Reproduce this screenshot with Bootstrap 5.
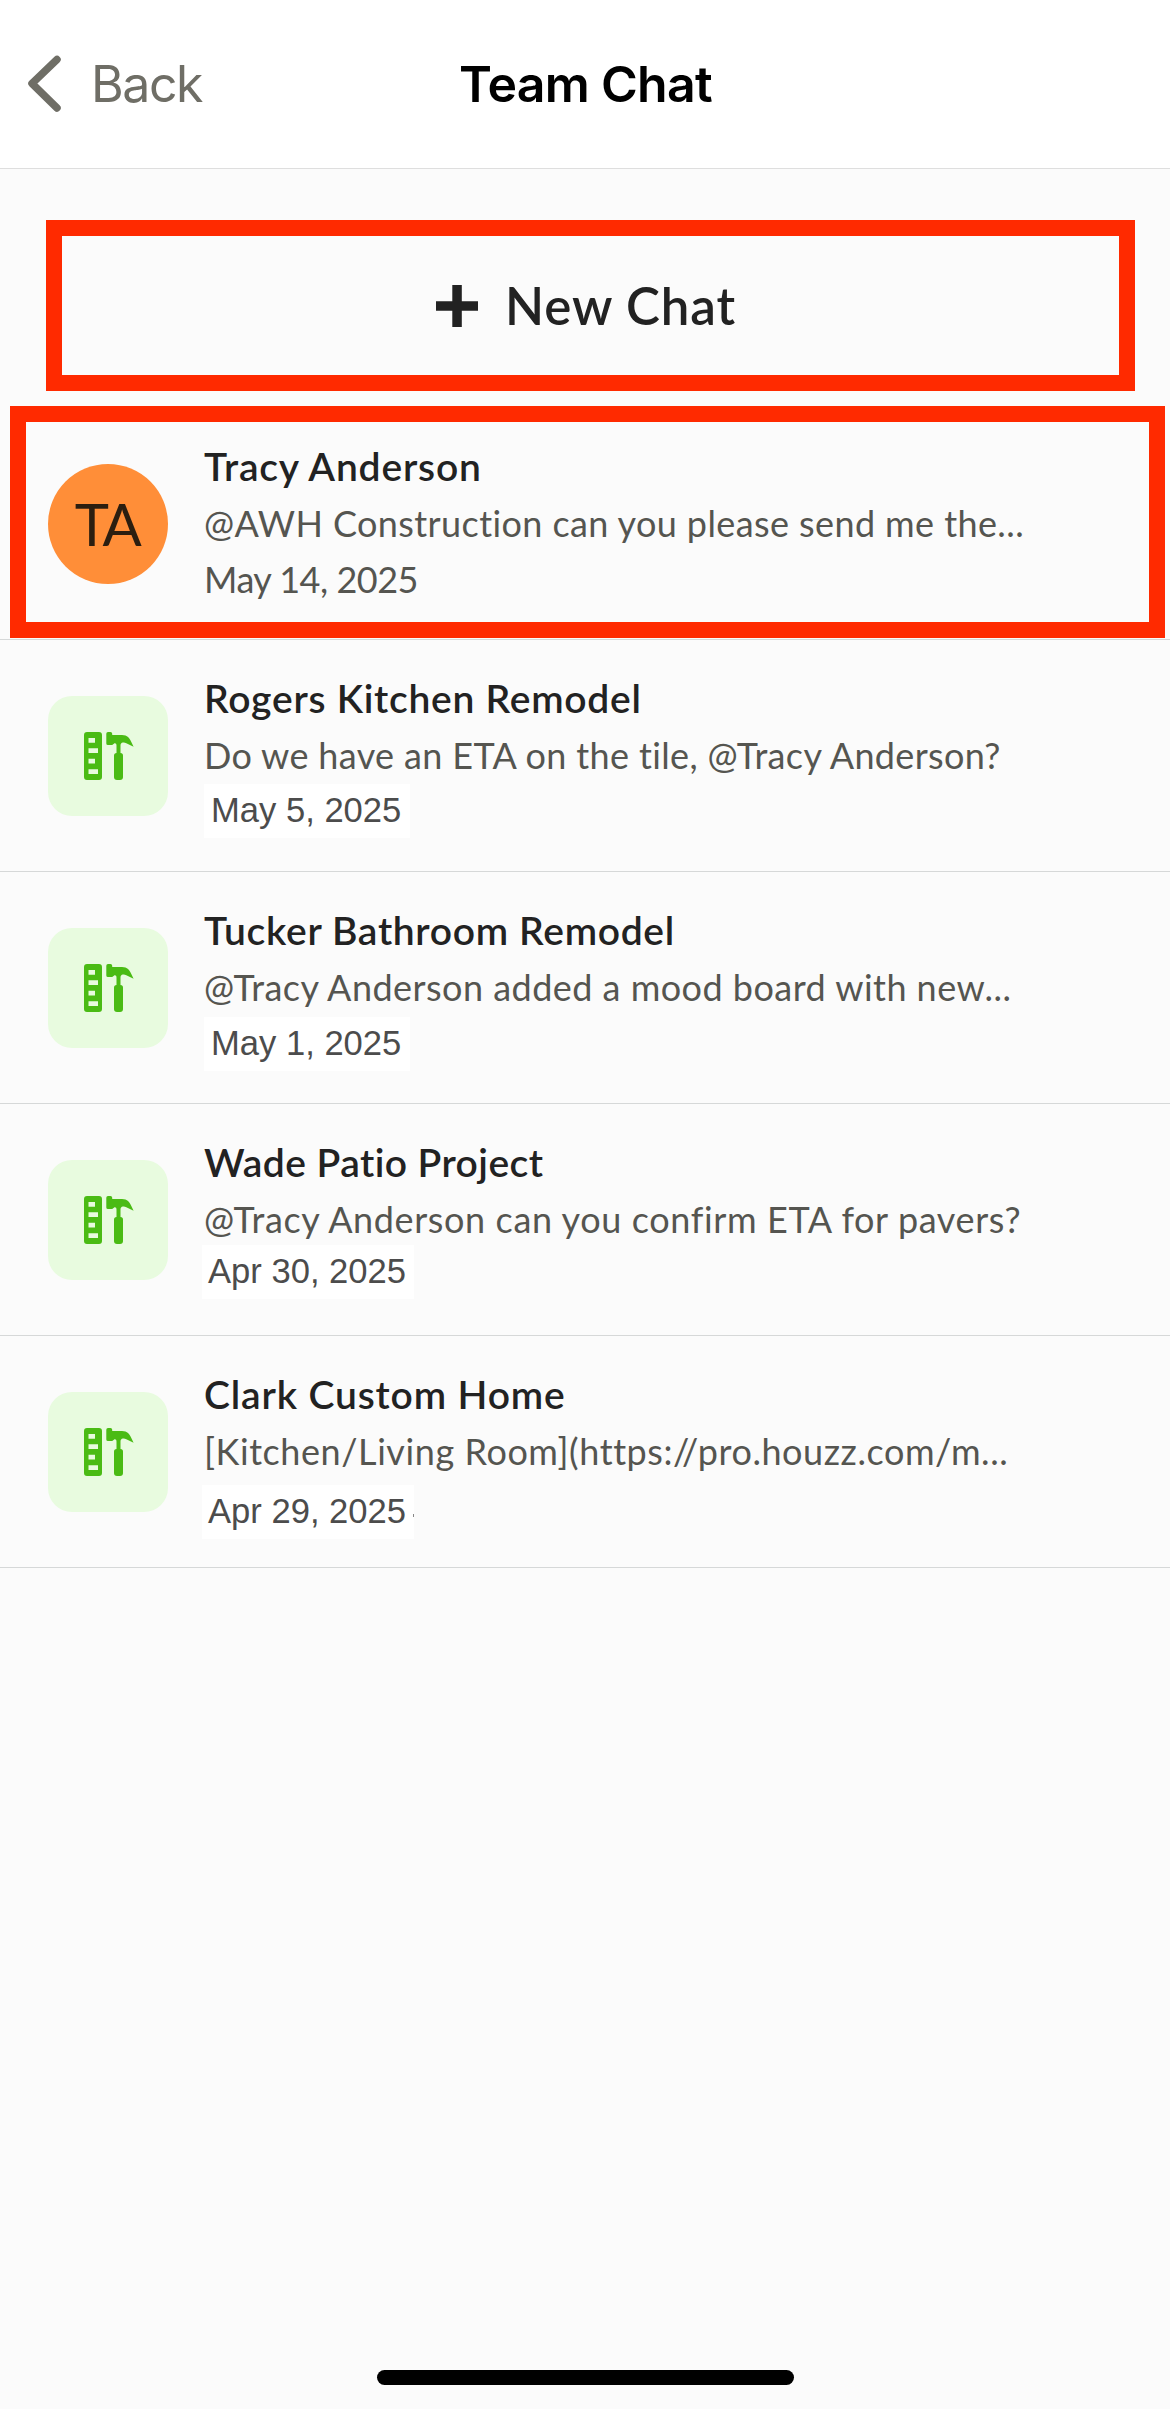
<!DOCTYPE html>
<html lang="en">
<head>
<meta charset="utf-8">
<meta name="viewport" content="width=device-width, initial-scale=1">
<title>Team Chat</title>
<link rel="stylesheet" href="https://cdn.jsdelivr.net/npm/bootstrap@5.3.0/dist/css/bootstrap.min.css">
<style>
  body { background: #fbfbfb; font-family: Lato, "Liberation Sans", sans-serif; color: #222; }
  .screen { height: 2409px; }
  .top-bar { height: 169px; border-bottom: 1px solid #dedede; font-family: Inter, "Liberation Sans", sans-serif; font-size: 50px; line-height: 60px; padding: 54px 0 0 27px; }
  .back-link { color: #6f6e66; letter-spacing: -1.45px; gap: 29px; width: 432px; }
  .top-title { color: #000; font-size: 50px; font-weight: 600; letter-spacing: -.71px; line-height: 60px; }
  .new-chat-area { height: 239px; padding: 51px 35px 0 46px; }
  .new-chat { height: 171px; border: 16px solid #ff2a00; border-radius: 0; font-size: 51px; font-weight: 600; letter-spacing: .9px; color: #222; gap: 27px; padding: 0 9px 0 0; line-height: 60px; }
  .new-chat:hover { border-color: #ff2a00; color: #222; }
  .chat-row { height: 232px; border-bottom: 1px solid #d6d8d8; padding: 30px 48px 0; gap: 36px; color: #222; }
  .focus-frame { position: absolute; top: -2px; left: 10px; right: 5px; height: 232px; border: 16px solid #ff2a00; }
  .avatar { width: 120px; height: 120px; margin-top: 26px; flex: none; }
  .avatar-person { background: #ff8e38; font-size: 58px; letter-spacing: -2.5px; color: #2b1e10; padding: 0 2px 1px 0; }
  .avatar-project { background: #e8fbdf; border-radius: 24px; }
  .chat-name { font-size: 39px; font-weight: 600; line-height: 57px; }
  .chat-text { font-size: 36px; line-height: 56px; color: #555550; }
  .date-chip { background: #fff; font-family: "Liberation Sans", Arial, sans-serif; font-size: 34.6px; line-height: 52px; height: 54px; color: #4c4c4c; padding-left: 7px; width: 206px; }
  .date-chip.wide { width: 212px; margin-left: -2px; padding-left: 6px; }
  .tick { width: 1px; height: 3px; background: #888; margin-top: 29px; }
  .home-bar { width: 417px; height: 15px; background: #000; margin-bottom: 24px; }
</style>
</head>
<body>
<div class="screen d-flex flex-column">
  <header class="top-bar bg-white d-flex align-items-start">
    <a href="#" class="back-link d-flex text-decoration-none">
      <svg width="35" height="60" viewBox="0 0 35 60"><path d="M30 5.500L5 29.500L30 54" fill="none" stroke="#6f6e66" stroke-width="7.500" stroke-linecap="round" stroke-linejoin="round"/></svg>
      <span>Back</span>
    </a>
    <h1 class="top-title mb-0">Team Chat</h1>
  </header>

  <div class="new-chat-area">
    <button class="new-chat btn w-100 d-flex align-items-center justify-content-center">
      <svg width="42" height="42" viewBox="0 0 42 42"><path d="M16.300 0h9.500v16.300H42v9.500H25.800V42h-9.500V25.800H0v-9.500h16.300z" fill="#222"/></svg>
      <span>New Chat</span>
    </button>
  </div>

  <main>
    <div class="chat-row d-flex position-relative">
      <div class="avatar avatar-person rounded-circle d-flex align-items-center justify-content-center">TA</div>
      <div class="text-nowrap">
        <div class="chat-name" style="letter-spacing:.83px">Tracy Anderson</div>
        <div class="chat-text" style="letter-spacing:.4px">@AWH Construction can you please send me the...</div>
        <div class="chat-text" style="letter-spacing:-.5px">May 14, 2025</div>
      </div>
      <div class="focus-frame"></div>
    </div>

    <div class="chat-row d-flex">
      <div class="avatar avatar-project"><svg width="120" height="120" viewBox="0 0 120 120"><use href="#tools"/></svg></div>
      <div class="text-nowrap">
        <div class="chat-name" style="letter-spacing:.74px">Rogers Kitchen Remodel</div>
        <div class="chat-text" style="letter-spacing:.35px">Do we have an ETA on the tile, @Tracy Anderson?</div>
        <div class="date-chip" style="margin-top:1px">May 5, 2025</div>
      </div>
    </div>

    <div class="chat-row d-flex">
      <div class="avatar avatar-project"><svg width="120" height="120" viewBox="0 0 120 120"><use href="#tools"/></svg></div>
      <div class="text-nowrap">
        <div class="chat-name" style="letter-spacing:.68px">Tucker Bathroom Remodel</div>
        <div class="chat-text" style="letter-spacing:.47px">@Tracy Anderson added a mood board with new...</div>
        <div class="date-chip" style="margin-top:2px">May 1, 2025</div>
      </div>
    </div>

    <div class="chat-row d-flex">
      <div class="avatar avatar-project"><svg width="120" height="120" viewBox="0 0 120 120"><use href="#tools"/></svg></div>
      <div class="text-nowrap">
        <div class="chat-name" style="letter-spacing:.43px">Wade Patio Project</div>
        <div class="chat-text" style="letter-spacing:.62px">@Tracy Anderson can you confirm ETA for pavers?</div>
        <div class="date-chip wide" style="margin-top:-2px">Apr 30, 2025</div>
      </div>
    </div>

    <div class="chat-row d-flex">
      <div class="avatar avatar-project"><svg width="120" height="120" viewBox="0 0 120 120"><use href="#tools"/></svg></div>
      <div class="text-nowrap">
        <div class="chat-name" style="letter-spacing:.85px">Clark Custom Home</div>
        <div class="chat-text" style="letter-spacing:.57px">[Kitchen/Living Room](https://pro.houzz.com/m...</div>
        <div class="date-chip wide d-flex justify-content-between" style="margin-top:6px">Apr 29, 2025<span class="tick"></span></div>
      </div>
    </div>
  </main>

  <div class="home-bar rounded-pill mx-auto mt-auto"></div>
</div>

<svg width="0" height="0" class="position-absolute">
  <defs>
    <g id="tools" fill="#4abb14">
      <path fill-rule="evenodd" d="M39 36h12a3 3 0 0 1 3 3v42a3 3 0 0 1-3 3H39a3 3 0 0 1-3-3V39a3 3 0 0 1 3-3zM40.500 42v4.700H47V42zM40.500 52.300V57H50v-4.700zM40.500 62.800v4.700H47v-4.700zM40.500 73.300V78H50v-4.700z"/>
      <path d="M60 36h2.500a1.700 1.700 0 0 1 1.700 1.700V39H74c5.500 0 7.500 3 9.300 7l2.300 4.800-7.300-3.600c-1.300-.7-2.500-.8-3.500-.6-1.400.3-2.300 1.300-2.300 3V57h-4v-7.400c0-2.200-1.400-2.800-2.600-1.900l-1.700 1.400H60a1.700 1.700 0 0 1-1.700-1.700v-9.700A1.700 1.700 0 0 1 60 36z"/>
      <path d="M68.500 57h4a2.500 2.500 0 0 1 2.500 2.500V81a3 3 0 0 1-3 3h-3a3 3 0 0 1-3-3V59.500a2.500 2.500 0 0 1 2.500-2.500z"/>
    </g>
  </defs>
</svg>
<script src="https://cdn.jsdelivr.net/npm/bootstrap@5.3.0/dist/js/bootstrap.bundle.min.js"></script>
</body>
</html>
